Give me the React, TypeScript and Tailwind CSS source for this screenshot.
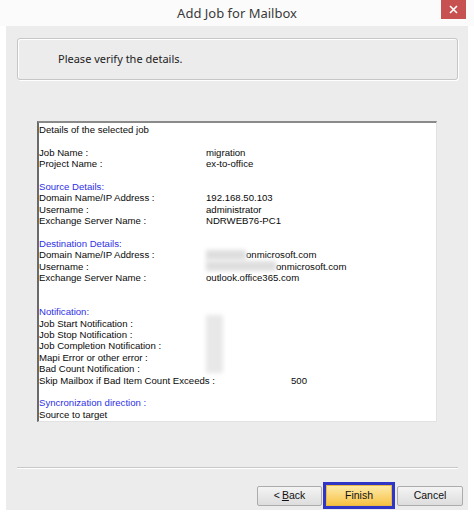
import React from "react";

const Blur = ({ w, h, className = "" }: { w: number; h: number; className?: string }) => (
  <span
    className={"inline-block align-middle bg-[#dedede] blur-[2px] " + className}
    style={{ width: w, height: h }}
  />
);

type Row = { l?: string; v?: React.ReactNode; blue?: boolean };

const rows: Row[] = [
  { l: "Details of the selected job" },
  {},
  { l: "Job Name :", v: "migration" },
  { l: "Project Name :", v: "ex-to-office" },
  {},
  { l: "Source Details:", blue: true },
  { l: "Domain Name/IP Address :", v: "192.168.50.103" },
  { l: "Username :", v: "administrator" },
  { l: "Exchange Server Name :", v: "NDRWEB76-PC1" },
  {},
  { l: "Destination Details:", blue: true },
  {
    l: "Domain Name/IP Address :",
    v: (
      <span className="flex items-center">
        <Blur w={40} h={10} />
        onmicrosoft.com
      </span>
    ),
  },
  {
    l: "Username :",
    v: (
      <span className="flex items-center">
        <Blur w={70} h={10} />
        onmicrosoft.com
      </span>
    ),
  },
  { l: "Exchange Server Name :", v: "outlook.office365.com" },
  {},
  {},
  { l: "Notification:", blue: true },
  { l: "Job Start Notification :" },
  { l: "Job Stop Notification :" },
  { l: "Job Completion Notification :" },
  { l: "Mapi Error or other error :" },
  { l: "Bad Count Notification :" },
  { l: "Skip Mailbox if Bad Item Count Exceeds  :", v: <span className="pl-[85px]">500</span> },
  {},
  { l: "Syncronization direction :", blue: true },
  { l: "Source to target" },
];

export default function App() {
  return (
    <div
      className="w-[474px] h-[516px] bg-white relative overflow-hidden"
      style={{ fontFamily: "'Noto Sans', 'Open Sans', sans-serif" }}
    >
      {/* title bar */}
      <div className="h-[26px] flex items-center justify-center bg-[#fbfbfb]">
        <span className="text-[13px] text-[#3a3a3a] leading-none pt-[1px]">Add Job for Mailbox</span>
      </div>
      <div className="absolute top-0 right-[8px] w-[25px] h-[19px] bg-[#c75050] flex items-center justify-center">
        <svg width="9" height="9" viewBox="0 0 9 9">
          <path d="M1 1 L8 8 M8 1 L1 8" stroke="white" strokeWidth="1.6" />
        </svg>
      </div>

      {/* client */}
      <div className="ml-[6px] w-[462px] h-[484px] bg-[#ececec] flex flex-col">
        <div className="mt-[12px] ml-[11px] w-[441px] h-[42px] rounded-[3px] border border-[#c6c6c6] shadow-[inset_1px_1px_0_#ffffff,1px_1px_0_#ffffff] flex items-center pl-[40px]">
          <span className="text-[11px] text-[#222]">Please verify the details.</span>
        </div>

        <div
          className="mt-[41px] ml-[31px] w-[400px] h-[301px] bg-white border-l-2 border-t-2 border-l-[#6a6a6a] border-t-[#8a8a8a] border-r border-b border-r-[#e2e2e2] border-b-[#e2e2e2] pt-[1px] text-[9.6px] leading-[11.4px] text-[#0a0a0a] relative"
          style={{ fontFamily: "'Liberation Sans', Arial, sans-serif" }}
        >
          {rows.map((r, i) => (
            <div key={i} className="flex h-[11.4px] items-center whitespace-nowrap">
              <span className={"w-[167px] " + (r.blue ? "text-[#2f2fe6]" : "")}>{r.l ?? "\u00a0"}</span>
              {r.v !== undefined && <span>{r.v}</span>}
            </div>
          ))}
          <div className="absolute left-[167px] top-[192px] w-[17px] h-[58px] bg-[#e8e8e8] blur-[2px]" />
        </div>

        <div className="mt-[45px] ml-[11px] w-[441px] h-[2px] border-t border-[#c8c8c8] border-b border-b-white" />

        <div className="mt-[13px] flex items-center pl-[251px]">
          <button className="w-[65px] h-[20px] rounded-[2px] border border-[#acacac] bg-gradient-to-b from-[#f4f4f4] to-[#dddddd] text-[10.5px] text-[#111] flex items-center justify-center"
            style={{ fontFamily: "'Liberation Sans', Arial, sans-serif" }}>
            &lt; <span className="underline ml-[2px]">B</span>ack
          </button>
          <div className="ml-[1px] w-[72px] h-[27px] border-[3px] border-[#2f35c4] flex">
            <button className="flex-1 bg-gradient-to-b from-[#fdeaa6] to-[#f7c23f] text-[10.5px] text-[#111] flex items-center justify-center border border-[#e8b84a]"
              style={{ fontFamily: "'Liberation Sans', Arial, sans-serif" }}>
              Finish
            </button>
          </div>
          <button className="ml-[2px] w-[66px] h-[20px] rounded-[2px] border border-[#acacac] bg-gradient-to-b from-[#f4f4f4] to-[#dddddd] text-[10.5px] text-[#111] flex items-center justify-center"
            style={{ fontFamily: "'Liberation Sans', Arial, sans-serif" }}>
            Cancel
          </button>
        </div>
      </div>
    </div>
  );
}
